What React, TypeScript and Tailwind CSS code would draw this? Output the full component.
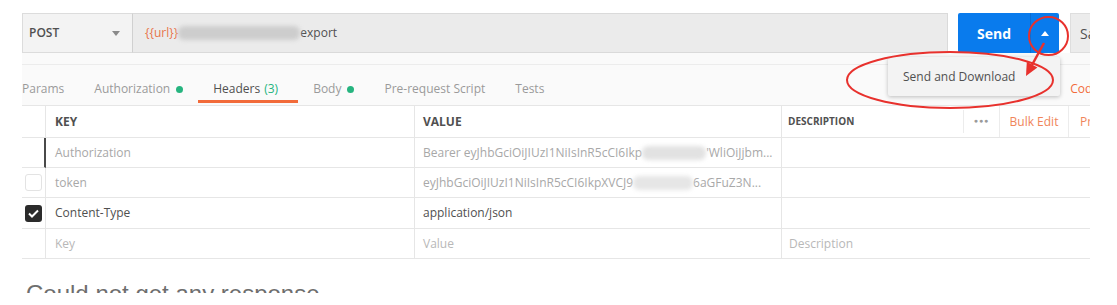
import React from 'react';

const font = { fontFamily: '"Open Sans", "Liberation Sans", sans-serif' };

const Dot = () => <span className="ml-[6px] inline-block w-[7px] h-[7px] rounded-full bg-[#26b47f]" />;

const Tab: React.FC<{ label: React.ReactNode; active?: boolean }> = ({ label, active }) => (
  <div className={`flex flex-col pl-[15px] shrink-0 ${active ? 'pr-[20px]' : 'pr-[15px]'}`}>
    <div className={`pt-[16px] h-[32px] leading-[16px] text-[12px] flex items-center whitespace-nowrap ${active ? 'text-[#505050]' : 'text-[#9a9a9a]'}`}>
      {label}
    </div>
    <div className={`mt-[3px] h-[3px] ${active ? 'bg-[#f26b3a] mx-[-15px] mr-[-20px]' : ''}`} />
  </div>
);

const Blur: React.FC<{ w: string; color: string }> = ({ w, color }) => (
  <span className={`inline-block ${w} h-[14px] ${color} blur-[2px] rounded-[6px] align-middle`} />
);

const Cell: React.FC<{ children?: React.ReactNode; className?: string }> = ({ children, className = '' }) => (
  <div className={`border-r border-[#e6e6e6] flex items-center text-[12px] whitespace-nowrap overflow-hidden ${className}`}>
    {children}
  </div>
);

export default function App() {
  return (
    <div className="relative w-[1117px] h-[305px] bg-white overflow-hidden" style={font}>
      <div className="ml-[22px] w-[1068px] h-[293px] overflow-hidden flex flex-col bg-[#fafafa]">
        {/* request line */}
        <div className="bg-white pt-[13px]">
          <div className="flex h-[40px]">
            <div className="w-[111px] shrink-0 bg-[#f3f3f3] border border-[#dcdcdc] border-r-[#d0d0d0] flex items-center pl-[6px] pr-[12px]">
              <span className="text-[12px] text-[#505050] font-semibold">POST</span>
              <svg className="ml-auto" width="8" height="5" viewBox="0 0 8 5"><path d="M0 0h8L4 5z" fill="#8a8a8a" /></svg>
            </div>
            <div className="w-[815px] shrink-0 bg-[#ebebeb] border border-l-0 border-[#dadada] flex items-center pl-[12px] text-[12px] whitespace-nowrap">
              <span className="text-[#e8744a]">{'{{url}}'}</span>
              <Blur w="w-[122px]" color="bg-[#cdcdcd]" />
              <span className="text-[#505050]">export</span>
            </div>
            <div className="ml-[10px] w-[101px] shrink-0 flex bg-[#097bed] rounded-[2px]">
              <div className="w-[72px] flex items-center justify-center text-white font-bold text-[14px]">Send</div>
              <div className="flex-1 border-l border-[#0a6dd2] flex items-center justify-center">
                <svg width="8" height="5" viewBox="0 0 8 5"><path d="M0 5h8L4 0z" fill="#fff" /></svg>
              </div>
            </div>
            <div className="ml-[11px] w-[70px] shrink-0 bg-[#ececec] border border-[#dedede] flex items-center pl-[9px] text-[14px] text-[#505050] whitespace-nowrap">
              Save
            </div>
          </div>
          <div className="h-[11px] bg-[#fafafa]" />
        </div>

        {/* tabs */}
        <div className="h-[41px] border-t border-[#ececec] flex bg-[#fafafa] shrink-0">
          <div className="flex ml-[-15px]">
            <Tab label="Params" />
            <Tab label={<>Authorization<Dot /></>} />
            <Tab active label={<>Headers <span className="ml-[4px] text-[#26b47f]">(3)</span></>} />
            <Tab label={<>Body<Dot /></>} />
            <Tab label="Pre-request Script" />
            <Tab label="Tests" />
          </div>
          <div className="flex-1" />
          <div className="flex pt-[16px] text-[12px] leading-[16px] text-[#f26b3a] whitespace-nowrap shrink-0 mr-[-9px]">
            <span className="mr-[14px]">Cookies</span>
            <span>Code</span>
          </div>
        </div>

        {/* table */}
        <div className="bg-white border-t border-[#e6e6e6] grid grid-cols-[24px_369px_367px_308px] shrink-0">
          <Cell className="h-[32px] border-b" />
          <Cell className="h-[32px] border-b pl-[9px] text-[10px] font-bold text-[#505050]">KEY</Cell>
          <Cell className="h-[32px] border-b pl-[8px] text-[10px] font-bold text-[#505050]">VALUE</Cell>
          <div className="h-[32px] border-b border-[#e6e6e6] flex items-stretch text-[10px] whitespace-nowrap">
            <div className="flex-1 flex items-center pl-[6px] font-bold text-[#505050]">DESCRIPTION</div>
            <div className="w-[36px] my-[4px] border-l border-[#ececec] flex items-center justify-center text-[#9a9a9a] text-[7px] tracking-[1px]">●●●</div>
            <div className="w-[70px] border-l border-r border-[#ececec] flex items-center justify-center text-[12px] text-[#f0855a]">Bulk Edit</div>
            <div className="w-[21px] overflow-hidden flex items-center pl-[11px] text-[12px] text-[#f0855a]">Presets</div>
          </div>

          <Cell className="h-[30px] border-b border-r-[2px] border-r-[#4a4a4a]" />
          <Cell className="h-[30px] border-b pl-[9px] text-[#a8a8a8]">Authorization</Cell>
          <Cell className="h-[30px] border-b pl-[8px] text-[#a8a8a8]">
            Bearer eyJhbGciOiJIUzI1NiIsInR5cCI6Ikp
            <Blur w="w-[64px]" color="bg-[#e2e2e2]" />
            'WliOiJjbm...
          </Cell>
          <Cell className="h-[30px] border-b border-r-0" />

          <Cell className="h-[30px] border-b pl-[3px]">
            <span className="w-[17px] h-[17px] rounded-[3px] border border-[#e3e3e3] bg-white" />
          </Cell>
          <Cell className="h-[30px] border-b pl-[9px] text-[#a8a8a8]">token</Cell>
          <Cell className="h-[30px] border-b pl-[8px] text-[#a8a8a8]">
            eyJhbGciOiJIUzI1NiIsInR5cCI6IkpXVCJ9
            <Blur w="w-[60px]" color="bg-[#e6e6e6]" />
            6aGFuZ3N...
          </Cell>
          <Cell className="h-[30px] border-b border-r-0" />

          <Cell className="h-[31px] border-b pl-[3px]">
            <span className="w-[17px] h-[17px] rounded-[3px] bg-[#2b2b2b] flex items-center justify-center">
              <svg width="11" height="9" viewBox="0 0 11 9"><path d="M1 4.5l3 3L10 1.5" stroke="#fff" strokeWidth="2" fill="none" /></svg>
            </span>
          </Cell>
          <Cell className="h-[31px] border-b pl-[9px] text-[#505050]">Content-Type</Cell>
          <Cell className="h-[31px] border-b pl-[8px] text-[#505050]">application/json</Cell>
          <Cell className="h-[31px] border-b border-r-0" />

          <Cell className="h-[30px] border-b" />
          <Cell className="h-[30px] border-b pl-[9px] text-[#b8b8b8]">Key</Cell>
          <Cell className="h-[30px] border-b pl-[8px] text-[#b8b8b8]">Value</Cell>
          <Cell className="h-[30px] border-b border-r-0 pl-[7px] text-[#b8b8b8]">Description</Cell>
        </div>

        {/* response */}
        <div className="flex-1 bg-white overflow-hidden">
          <div className="pt-[23px] pl-[4px] text-[24px] leading-[24px] text-[#6e6e6e] whitespace-nowrap" style={{ fontFamily: '"Liberation Sans", Arial, sans-serif' }}>
            Could not get any response
          </div>
        </div>
      </div>

      {/* dropdown menu */}
      <div className="absolute left-[888px] top-[57px] w-[172px] h-[39px] bg-[#f3f3f3] rounded-[2px] shadow-[0_1px_4px_rgba(0,0,0,0.25)] flex items-center pl-[15px] text-[12px] text-[#505050]">
        Send and Download
      </div>

      {/* red annotations */}
      <svg className="absolute inset-0 pointer-events-none" width="1117" height="305" viewBox="0 0 1117 305">
        <ellipse cx="950" cy="80" rx="103" ry="28" fill="none" stroke="#e8312d" strokeWidth="2" />
        <ellipse cx="1048.5" cy="36" rx="19.5" ry="19" fill="none" stroke="#e8312d" strokeWidth="2" />
        <line x1="1044" y1="43" x2="1032" y2="65" stroke="#e8312d" strokeWidth="2.5" />
        <polygon points="1026,76 1037.4,67.4 1026.8,61.8" fill="#e8312d" />
      </svg>
    </div>
  );
}
